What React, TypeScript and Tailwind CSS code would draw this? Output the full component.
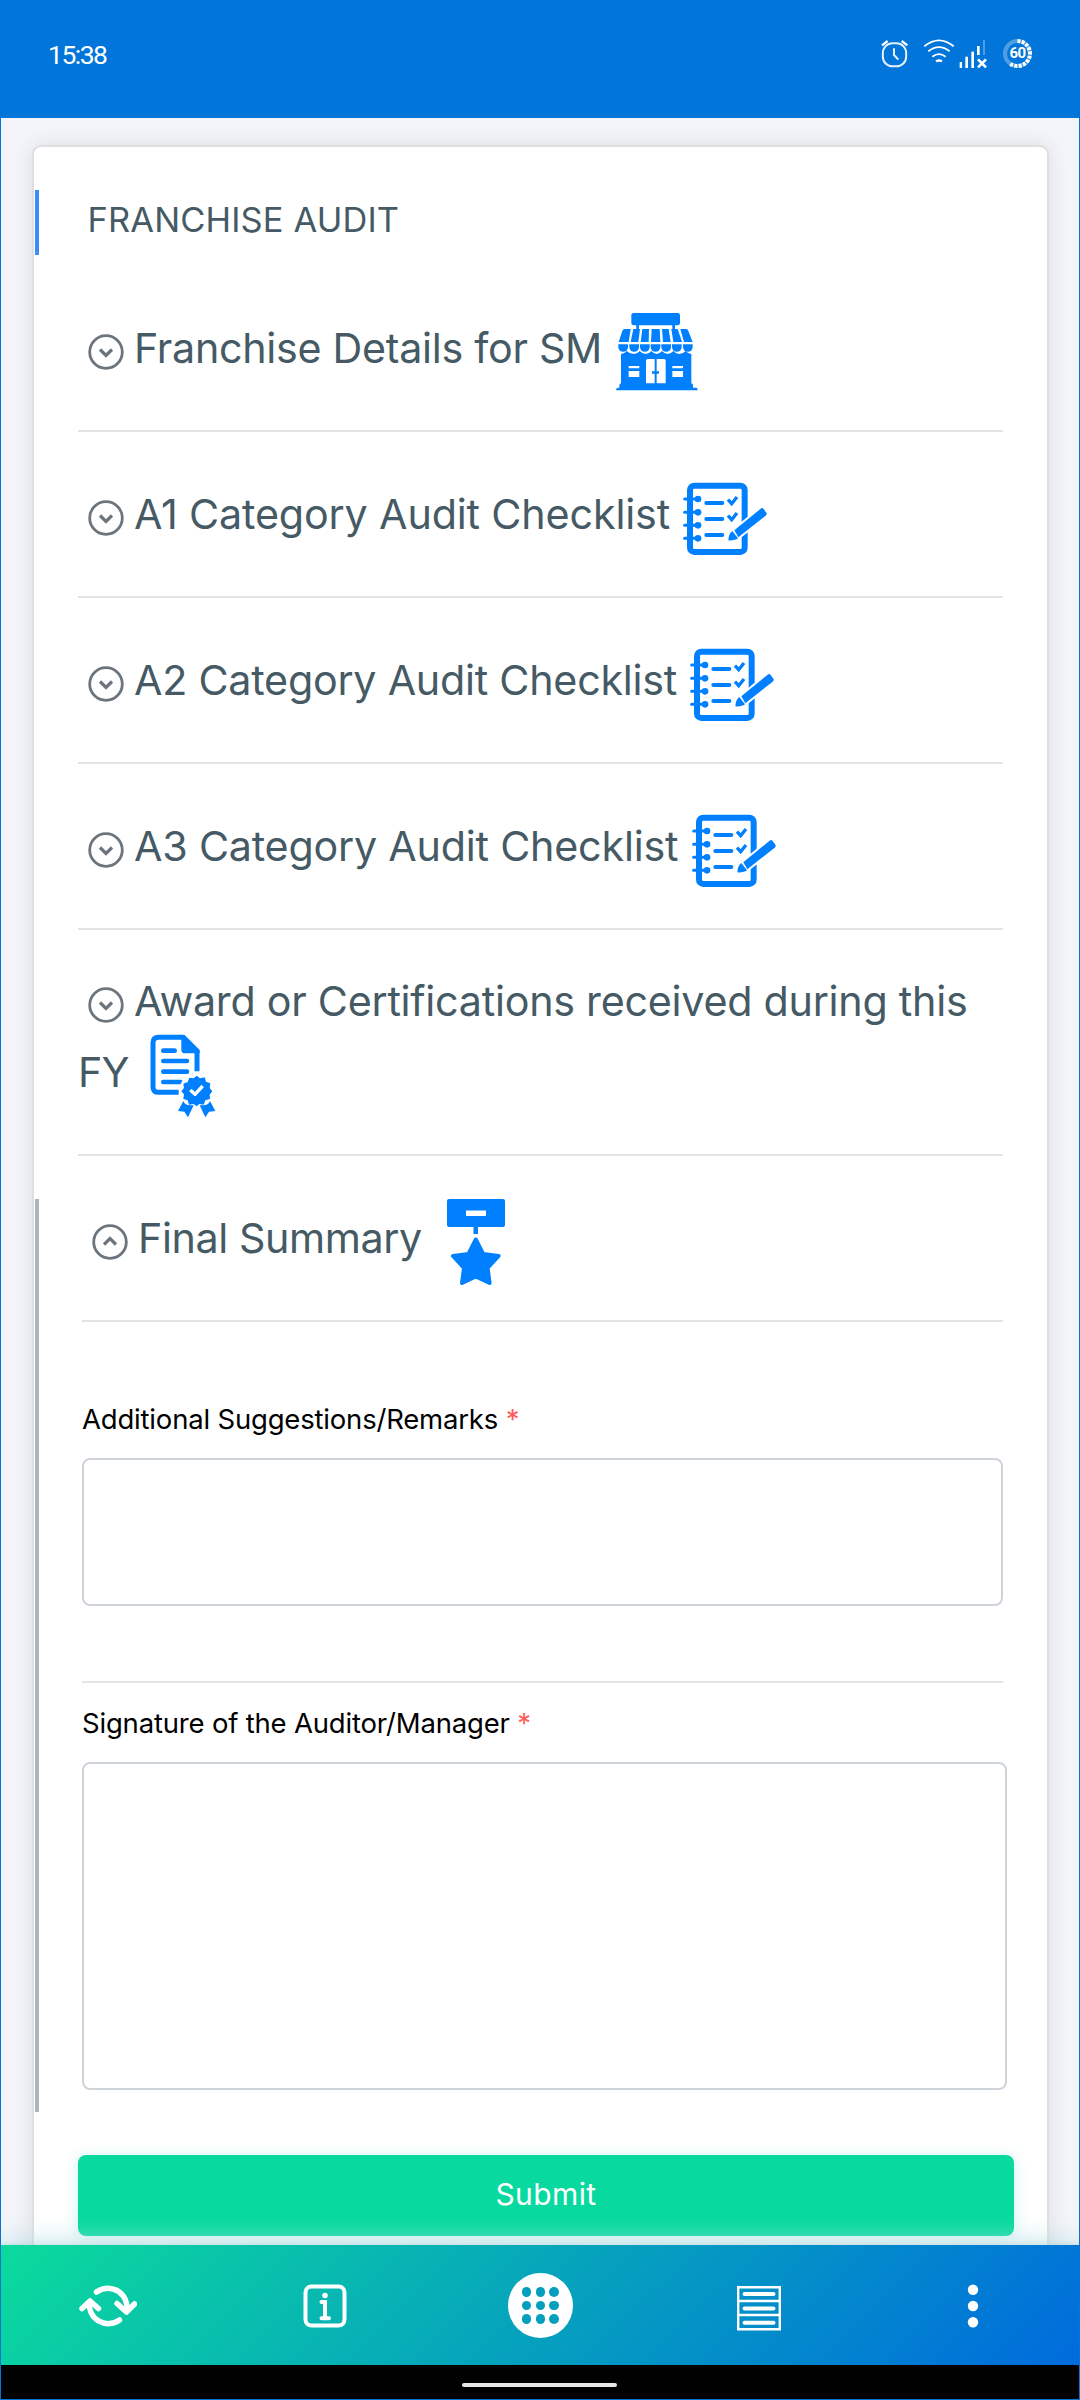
import type { ReactNode } from 'react';

const BLUE = '#007fff';

/* ---------- Status bar ---------- */

function AlarmIcon() {
  return (
    <svg className="h-[30px] w-[30px]" viewBox="120 114 90 90" fill="none" stroke="#fff">
      <rect x="128.5" y="130" width="70" height="69" rx="29" strokeWidth="6" opacity="0.9" />
      <path d="M162 145v20l13 14" strokeWidth="6" opacity="0.9" />
      <path d="M126 136l17-13M202 136l-17-13" strokeWidth="7" />
    </svg>
  );
}

function WifiIcon() {
  return (
    <svg className="h-[30px] w-[32px]" viewBox="249 114 96 90" fill="none" stroke="#fff" strokeWidth="5.5">
      <path d="M253 139Q297 103 341 139" />
      <path d="M265 154Q297 129 329 154" />
      <path d="M277 170Q297 155 317 170" />
      <path d="M288 184Q297 179 306 184" strokeWidth="7" />
    </svg>
  );
}

function SignalIcon() {
  return (
    <svg className="h-[31px] w-[29px]" viewBox="357 114 87 93" fill="#fff">
      <rect x="359" y="186" width="7" height="18" />
      <rect x="376" y="170" width="8" height="34" />
      <rect x="394" y="155" width="8" height="49" />
      <rect x="411" y="138" width="8" height="27" />
      <rect x="429" y="120" width="6" height="45" opacity="0.3" />
      <path d="M414 178l24 24M438 178l-24 24" stroke="#fff" strokeWidth="8" />
    </svg>
  );
}

function BatteryIcon() {
  return (
    <div className="relative flex h-[31px] w-[31px] items-center justify-center">
      <svg className="absolute inset-0" viewBox="486 114 93 93" fill="none" stroke="#fff" strokeWidth="12">
        <circle cx="532.5" cy="160.5" r="37.5" opacity="0.3" />
        <path d="M532.5 123a37.5 37.5 0 1 1-22 67.900" strokeDasharray="9 4" />
      </svg>
      <span className="relative font-['Roboto',sans-serif] text-[15px] leading-none font-bold tracking-[-0.5px]">60</span>
    </div>
  );
}

function StatusBar() {
  return (
    <header className="flex h-[118px] items-start justify-between bg-[#0175d9] pr-[46px] pl-[47px] text-white">
      <span className="mt-[39px] font-['Roboto',sans-serif] text-[26.5px] leading-[31px] tracking-[-1.5px]">15:38</span>
      <div className="mt-[38px] flex items-start">
        <AlarmIcon />
        <div className="ml-[13px]">
          <WifiIcon />
        </div>
        <div className="ml-1">
          <SignalIcon />
        </div>
        <div className="ml-[14px]">
          <BatteryIcon />
        </div>
      </div>
    </header>
  );
}

/* ---------- Section icons ---------- */

function ChevronCircle({ up = false }: { up?: boolean }) {
  return (
    <svg className="mt-2 h-9 w-9 shrink-0" viewBox="0 0 36 36" fill="none" stroke="#6c757d">
      <circle cx="18" cy="18" r="16.3" strokeWidth="2.8" />
      <path d={up ? 'M12 20.500l6-6 6 6' : 'M12 15.500l6 6 6-6'} strokeWidth="3.2" />
    </svg>
  );
}

function StoreIcon() {
  return (
    <svg className="h-[78px] w-[82px]" viewBox="33 39 246 234" fill={BLUE}>
      <rect x="79" y="39" width="146" height="37" rx="7" />
      <rect x="94" y="74" width="8" height="14" />
      <rect x="202" y="74" width="8" height="14" />
      <path d="M58 87H77L71 126H41L52 93Q54 87 58 87z" />
      <path d="M85 87h20l-5 39H77z" />
      <path d="M112 87h20l-1 39h-24z" />
      <path d="M140 87h24l2 39h-28z" />
      <path d="M171 87h20l6 39h-23z" />
      <path d="M199 87h19l13 39h-26z" />
      <path d="M226 87h18q4 0 6 6l13 33h-26z" />
      {[40, 73, 105, 137, 169, 201, 234].map((x) => (
        <path key={x} d={`M${x} 133h29v8a14.500 14.500 0 0 1-29 0z`} />
      ))}
      <path
        fillRule="evenodd"
        d="M48 162q10 0 17-9 9 9 22 9 10 0 17-9 8 9 18 9t17-9q8 9 16 9t16-9q8 9 17 9t17-9q8 9 17 9 12 0 20-9 8 9 17 9v88q5 1 5 6v7h10q4 0 4 8H33q0-8 6-8h4v-7q0-5 5-6zM123 182v68h26v-29h-8v-7h8v-37h-20q-6 0-6 5zM155 177v37h7v7h-7v29h27v-68q0-5-5-5zM71 198v7h32v-7zM71 213v18h32v-18zM202 198v7h32v-7zM202 213v18h32v-18z"
      />
    </svg>
  );
}

function ChecklistIcon() {
  return (
    <svg className="h-[73px] w-[84px]" viewBox="270 81 252 219" fill="none" stroke={BLUE}>
      <rect x="291" y="92" width="164" height="199" rx="13" strokeWidth="18" />
      {/* spiral binding */}
      {[132, 172, 211, 250].map((y) => (
        <g key={y}>
          <path d={`M275 ${y}h40`} strokeWidth="9" strokeLinecap="round" />
          <circle cx="315" cy={y} r="10" fill={BLUE} stroke="none" />
        </g>
      ))}
      {[144, 192, 240].map((y) => (
        <path key={y} d={`M340 ${y}h48`} strokeWidth="12" strokeLinecap="round" />
      ))}
      <path d="M405 134l11 12 16-20M405 182l11 12 16-20" strokeWidth="10" />
      {/* pencil with a white outline over the page edge */}
      <path d="M424 226l79-65q5-4 9 1l8 11q3 5-2 9l-82 65z" fill={BLUE} stroke="#fff" strokeWidth="12" />
      <path d="M424 226l79-65q5-4 9 1l8 11q3 5-2 9l-82 65z" fill={BLUE} stroke="none" />
      <path d="M418 228l17 22q-9 7-29 6 0-18 12-28z" fill={BLUE} stroke="none" />
    </svg>
  );
}

function CertificateIcon() {
  return (
    <svg className="h-[84px] w-[66px]" viewBox="30 27 198 252" fill="none" stroke={BLUE}>
      <path d="M116 202H56q-17 0-17-17V54q0-17 17-17h71l44 44v58" strokeWidth="15" />
      <path d="M124 30h10l45 45v10h-44q-11 0-11-11z" fill={BLUE} stroke="none" />
      <path d="M70 77h34M70 108h71M70 140h71M70 171h52" strokeWidth="14" strokeLinecap="round" />
      <circle cx="170" cy="194" r="51" fill="#fff" stroke="none" />
      <path
        d="M170 152l10 8 14-3 4 13 13 5-2 14 8 10-8 10 1 13-14 4-5 13-13-2-8 7-9-7-14 2-4-13-13-4 2-14-8-9 8-10-2-13 13-5 5-13 13 2z"
        fill={BLUE}
        stroke="none"
      />
      <path d="M151 195l14 13 23-25" stroke="#fff" strokeWidth="10" strokeLinejoin="round" />
      <path d="M130 228q5 13 20 13h11l-17 36-11-17-19-2zM210 228q-5 13-20 13h-11l17 36 11-17 19-2z" fill={BLUE} stroke="none" />
    </svg>
  );
}

function MedalIcon() {
  return (
    <svg className="h-[86px] w-[58px]" viewBox="0 0 58 86" fill={BLUE}>
      <path fillRule="evenodd" d="M2 0h54q2 0 2 2v24q0 2-2 2H2q-2 0-2-2V2q0-2 2-2zM19 11.500v5.500h20V11.500z" />
      <rect x="26.5" y="28" width="4.5" height="7" />
      <path
        d="M28.800 40.500l7.300 14.500 15.500 2-11 12 2 15-13.800-6.500-13.800 6.500 2-15-11-12 15.500-2z"
        stroke={BLUE}
        strokeWidth="4"
        strokeLinejoin="round"
      />
    </svg>
  );
}

/* ---------- Form ---------- */

interface SectionRowProps {
  title: string;
  textClass: string;
  icon: ReactNode;
  up?: boolean;
}

function SectionRow({ title, textClass, icon, up }: SectionRowProps) {
  return (
    <div className="flex h-[166px] items-center border-b-2 border-[#e4e4e4] pl-[10px]">
      <ChevronCircle up={up} />
      <h2 className={`ml-[10px] shrink-0 pt-[2px] text-[41.25px] whitespace-nowrap ${textClass}`}>{title}</h2>
      <div className="mt-2">{icon}</div>
    </div>
  );
}

function FieldLabel({ children }: { children: ReactNode }) {
  return (
    <label className="block text-[27.5px] leading-10 tracking-[-0.19px] text-black">
      {children} <span className="text-[#ff5b5b]">*</span>
    </label>
  );
}

function AuditForm() {
  return (
    <div className="mt-[27px] ml-[31px] h-[2200px] w-[1017px] rounded-[9px] border-2 border-[#dfdfdf] bg-white pt-[43px] text-[#455a64] shadow-[0_0_22px_rgba(0,0,0,0.1)]">
      <div className="ml-px h-[65px] border-l-4 border-[#3d8bfd] pl-[48.5px]">
        <h1 className="text-[34.4px] leading-[59px] tracking-[0.16px]">FRANCHISE AUDIT</h1>
      </div>

      <div className="mt-[11px] ml-[44px] w-[925px]">
        <SectionRow title="Franchise Details for SM" textClass="w-[482px] tracking-[-0.3px]" icon={<StoreIcon />} />
        <SectionRow title="A1 Category Audit Checklist" textClass="w-[549px] tracking-[-0.15px]" icon={<ChecklistIcon />} />
        <SectionRow title="A2 Category Audit Checklist" textClass="w-[556px] tracking-[-0.25px]" icon={<ChecklistIcon />} />
        <SectionRow title="A3 Category Audit Checklist" textClass="w-[558px] tracking-[-0.22px]" icon={<ChecklistIcon />} />
        <div className="h-[226px] border-b-2 border-[#e4e4e4] pt-[35px]">
          <div className="flex h-[71px] items-center pl-[10px]">
            <ChevronCircle />
            <h2 className="ml-[10px] pt-[2px] text-[41.25px] tracking-[-0.26px] whitespace-nowrap">
              Award or Certifications received during this
            </h2>
          </div>
          <div className="flex h-[71px] items-center">
            <h2 className="w-[72px] pt-[2px] text-[41.25px] tracking-[-0.8px]">FY</h2>
            <div className="mt-2">
              <CertificateIcon />
            </div>
          </div>
        </div>
      </div>

      <div className="mt-[43px] ml-px flow-root h-[913px] border-l-4 border-[#a9b7bf] pl-[43px]">
        <div className="-mt-[43px] w-[921px]">
          <SectionRow title="Final Summary" textClass="w-[309px] tracking-[-0.42px]" icon={<MedalIcon />} up />
          <div className="mt-[77px]">
            <FieldLabel>Additional Suggestions/Remarks</FieldLabel>
            <textarea className="mt-[19px] block h-[148px] w-full resize-none rounded-lg border-2 border-[#ced4da]" />
          </div>
          <hr className="mt-[75px] border-t-2 border-[#e4e4e4]" />
          <div className="mt-5">
            <FieldLabel>Signature of the Auditor/Manager</FieldLabel>
            <div className="mt-[19px] h-[328px] w-[925px] rounded-lg border-2 border-[#ced4da]" />
          </div>
        </div>
      </div>

      <button className="mt-[43px] ml-[44px] flex h-[81px] w-[936px] items-center justify-center rounded-lg bg-[#08da9f] pb-[2px] text-[30px] tracking-[0.4px] text-white shadow-[0_2px_16px_rgba(8,190,180,0.2)]">
        Submit
      </button>
    </div>
  );
}

/* ---------- Bottom navigation ---------- */

function RefreshIcon() {
  return (
    <svg
      className="h-[44px] w-[58px]"
      viewBox="0 0 58 44"
      fill="none"
      stroke="#fff"
      strokeWidth="5.5"
      strokeLinecap="round"
      strokeLinejoin="round"
    >
      <path d="M17.500 8A19 19 0 0 1 47.500 27M38 19.500l9.500 8.500 8-8" />
      <path d="M40.500 36A19 19 0 0 1 10.500 18M3 24.500l8-7.500 8.500 7.500" />
    </svg>
  );
}

function InfoIcon() {
  return (
    <svg className="h-[44px] w-[44px]" viewBox="0 0 44 44" fill="none" stroke="#fff">
      <rect x="2.5" y="2.5" width="39" height="39" rx="6" strokeWidth="4" />
      <circle cx="22" cy="11.5" r="2.8" fill="#fff" stroke="none" />
      <path d="M18.500 18h3.500v16M18.500 34.300h7.500" strokeWidth="4" strokeLinecap="round" />
    </svg>
  );
}

function AppsIcon() {
  return (
    <div className="flex h-[65px] w-[65px] items-center justify-center rounded-full bg-white">
      <div className="grid grid-cols-3 gap-[4.3px]">
        {Array.from({ length: 9 }, (_, i) => (
          <span key={i} className="h-[9.4px] w-[9.4px] rounded-full bg-[#059fbe]" />
        ))}
      </div>
    </div>
  );
}

function ListIcon() {
  return (
    <svg className="h-[46px] w-[46px]" viewBox="0 0 46 46" fill="none" stroke="#fff">
      <path d="M2.200 2.200h41.600v42H2.200zM2.200 16h41.600M2.200 30h41.600" strokeWidth="2.4" />
      <path d="M8.500 9h29M8.500 23.500h29M8.500 37.800h29" strokeWidth="4" strokeLinecap="round" />
    </svg>
  );
}

function MoreIcon() {
  return (
    <svg className="h-[44px] w-[12px]" viewBox="0 0 12 44" fill="#fff">
      <circle cx="6" cy="5.7" r="5.2" />
      <circle cx="6" cy="22" r="5.2" />
      <circle cx="6" cy="38.3" r="5.2" />
    </svg>
  );
}

function BottomNav() {
  return (
    <nav className="relative z-10 grid h-[120px] grid-cols-5 items-center bg-[linear-gradient(135deg,#0bdb9c_0%,#006bdd_100%)] pt-px shadow-[0_-2px_24px_rgba(180,222,228,0.9),0_0_5px_rgba(0,0,0,0.15)]">
      <div className="flex justify-center pr-[2px]">
        <RefreshIcon />
      </div>
      <div className="flex justify-center pl-px">
        <InfoIcon />
      </div>
      <div className="flex justify-center pl-px">
        <AppsIcon />
      </div>
      <div className="flex justify-center pt-[5px] pl-[7px]">
        <ListIcon />
      </div>
      <div className="flex justify-center pl-[3px]">
        <MoreIcon />
      </div>
    </nav>
  );
}

export default function App() {
  return (
    <div className="h-[2400px] w-[1080px] overflow-hidden border-x border-b border-[#0175d9] bg-[#f4f5fa] font-['Inter',sans-serif]">
      <StatusBar />
      <main className="h-[2127px] overflow-hidden">
        <div className="flow-root">
          <AuditForm />
        </div>
      </main>
      <BottomNav />
      <div className="relative z-20 flex h-[34px] justify-center bg-black pt-[18px] pr-px">
        <div className="h-1 w-[155px] rounded-full bg-[#e9e6ea]" />
      </div>
    </div>
  );
}
